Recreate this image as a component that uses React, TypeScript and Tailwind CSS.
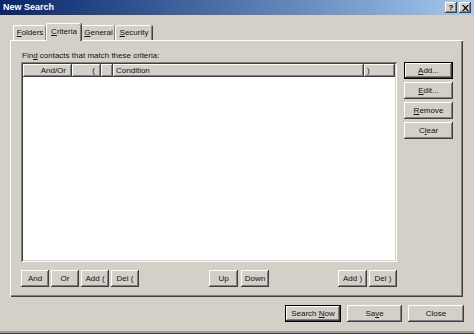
const raised =
  "bg-[#d4d0c8] shadow-[inset_-1px_-1px_#404040,inset_1px_1px_#ffffff,inset_-2px_-2px_#808080,inset_2px_2px_#d4d0c8]";
const defRaised =
  "bg-[#d4d0c8] shadow-[inset_0_0_0_1px_#000000,inset_-2px_-2px_#404040,inset_2px_2px_#ffffff,inset_-3px_-3px_#808080]";

function U({ children }: { children: string }) {
  return <span className="underline underline-offset-[1px]">{children}</span>;
}

function Btn({
  children,
  w,
  def = false,
}: {
  children: React.ReactNode;
  w: string;
  def?: boolean;
}) {
  return (
    <div
      className={`${def ? defRaised : raised} ${w} flex h-[17px] items-center justify-center leading-none`}
    >
      {children}
    </div>
  );
}

function Tab({
  children,
  w,
  active = false,
}: {
  children: React.ReactNode;
  w: string;
  active?: boolean;
}) {
  return (
    <div
      className={`${w} relative flex items-center justify-center rounded-t-[2px] border-l border-t border-white bg-[#d4d0c8] shadow-[inset_-1px_0_#808080,1px_0_#404040] ${
        active ? "z-10 mb-[-1px] h-[18px] pb-[1px]" : "h-[15px]"
      }`}
    >
      {children}
    </div>
  );
}

export default function App() {
  return (
    <div className="relative flex h-[334px] w-[474px] flex-col overflow-hidden bg-[#d4d0c8] font-['Liberation_Sans',Arial,sans-serif] text-[8px] text-[#111]">
      {/* title bar */}
      <div className="flex h-[15px] items-center bg-linear-to-r from-[#0a246a] to-[#a6caf0] pl-[3px] pr-[3px]">
        <span className="text-[9px] font-bold leading-none text-white">New Search</span>
        <div className="ml-auto flex gap-[2px]">
          <div className={`${raised} flex h-[11px] w-[12px] items-center justify-center text-[8px] font-bold leading-none text-[#000]`}>
            ?
          </div>
          <div className={`${raised} flex h-[11px] w-[12px] items-center justify-center`}>
            <svg width="7" height="6" viewBox="0 0 7 6">
              <path d="M0 0h1.5l2 2 2-2H7L4.3 3 7 6H5.5l-2-2-2 2H0l2.7-3z" fill="#000" />
            </svg>
          </div>
        </div>
      </div>

      {/* tabs */}
      <div className="flex h-[25px] items-end pl-[13px]">
        <Tab w="w-[33px]">
          <span><U>F</U>olders</span>
        </Tab>
        <Tab w="w-[35px]" active>
          <span><U>C</U>riteria</span>
        </Tab>
        <Tab w="w-[34px]">
          <span><U>G</U>eneral</span>
        </Tab>
        <Tab w="w-[37px]">
          <span><U>S</U>ecurity</span>
        </Tab>
      </div>

      {/* panel */}
      <div className="ml-[10px] flex h-[257px] w-[453px] flex-col shadow-[inset_1px_1px_#ffffff,inset_-1px_-1px_#404040,inset_-2px_-2px_#808080]">
        <div className="pl-[12px] pt-[10px] leading-[12px]">
          Fin<U>d</U> contacts that match these criteria:
        </div>
        <div className="flex pl-[11px]">
          <div className="h-[200px] w-[376px] bg-white p-[2px] shadow-[inset_1px_1px_#808080,inset_-1px_-1px_#ffffff,inset_2px_2px_#404040,inset_-2px_-2px_#d4d0c8]">
            <div className="flex h-[13px] leading-none">
              <div className={`${raised} flex w-[49px] items-center justify-end pr-[6px]`}>And/Or</div>
              <div className={`${raised} flex w-[29px] items-center justify-end pr-[6px]`}>(</div>
              <div className={`${raised} w-[12px]`} />
              <div className={`${raised} flex w-[251px] items-center pl-[3px]`}>Condition</div>
              <div className={`${raised} flex w-[31px] items-center pl-[3px]`}>)</div>
            </div>
          </div>
          <div className="ml-[7px] flex flex-col gap-[3px]">
            <Btn w="w-[49px]" def>
              <span><U>A</U>dd...</span>
            </Btn>
            <Btn w="w-[49px]">
              <span><U>E</U>dit...</span>
            </Btn>
            <Btn w="w-[49px]">
              <span><U>R</U>emove</span>
            </Btn>
            <Btn w="w-[49px]">
              <span>C<U>l</U>ear</span>
            </Btn>
          </div>
        </div>
        <div className="mt-[8px] flex w-[387px] pl-[11px]">
          <div className="flex gap-[2px]">
            <Btn w="w-[28px]">And</Btn>
            <Btn w="w-[28px]">Or</Btn>
            <Btn w="w-[28px]">Add (</Btn>
            <Btn w="w-[28px]">Del (</Btn>
          </div>
          <div className="ml-[70px] flex gap-[3px]">
            <Btn w="w-[29px]">Up</Btn>
            <Btn w="w-[28px]">Down</Btn>
          </div>
          <div className="ml-auto flex gap-[2px]">
            <Btn w="w-[29px]">Add )</Btn>
            <Btn w="w-[28px]">Del )</Btn>
          </div>
        </div>
      </div>

      {/* dialog buttons */}
      <div className="mt-[8px] flex justify-end gap-[6px] pr-[10px]">
        <Btn w="w-[56px]" def>
          <span>Search <U>N</U>ow</span>
        </Btn>
        <Btn w="w-[55px]">
          <span>Sa<U>v</U>e</span>
        </Btn>
        <Btn w="w-[56px]">Close</Btn>
      </div>

      <div className="mt-auto h-[3px] border-b border-[#404040] bg-[#a09c96]" />
    </div>
  );
}
